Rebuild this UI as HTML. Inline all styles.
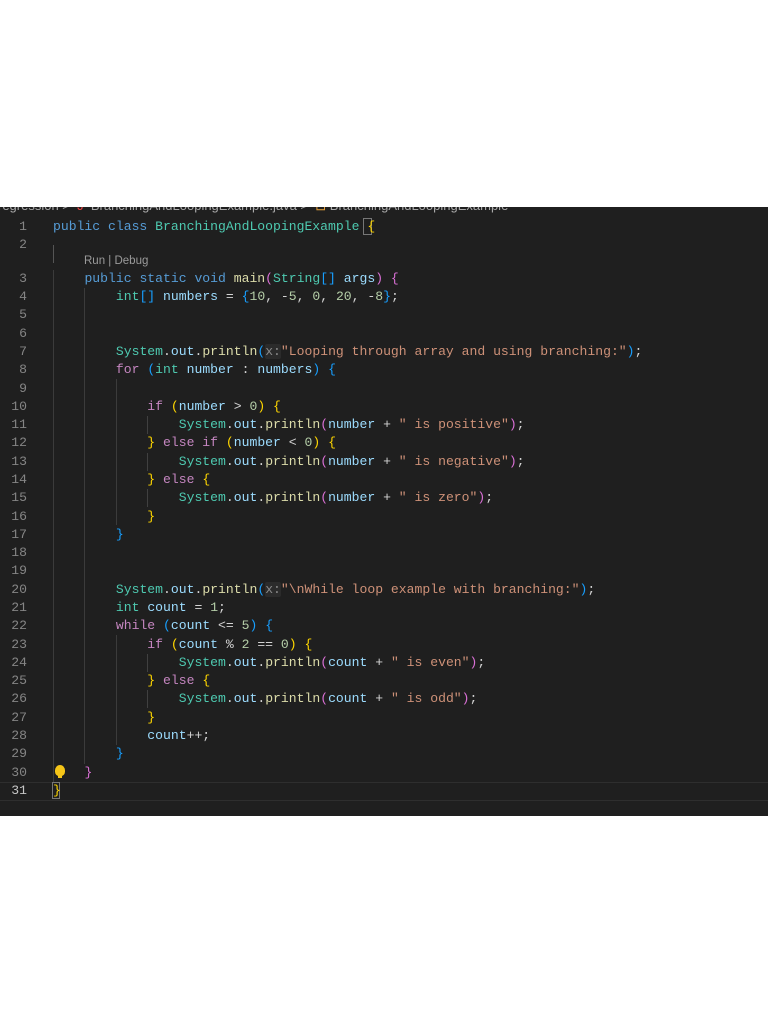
<!DOCTYPE html>
<html><head><meta charset="utf-8"><style>
body{margin:0;width:768px;height:1024px;background:#fff;position:relative;overflow:hidden}
#ed{position:absolute;left:0;top:207px;width:768px;height:609px;background:#1f1f1f;overflow:hidden}
#in{position:absolute;left:0;top:1px;width:768px;height:608px}
.bc{position:absolute;left:-2px;top:-9px;font:13px "Liberation Sans",sans-serif;color:#a9a9a9;white-space:pre}
.ln{position:absolute;left:0;width:27px;text-align:right;font:13.1px "Liberation Mono",monospace;color:#858585;height:18px;line-height:18px}
.cd{position:absolute;left:53px;font:13.1px "Liberation Mono",monospace;white-space:pre;color:#d4d4d4;height:18px;line-height:18px}
.k{color:#569cd6}.t{color:#4ec9b0}.f{color:#dcdcaa}.v{color:#9cdcfe}.s{color:#ce9178}.n{color:#b5cea8}.c{color:#c586c0}
.y{color:#ffd700}.p{color:#da70d6}.b{color:#179fff}
.h{color:#8b8b8b;background:#2b2b2b;border-radius:2px}
.g{position:absolute;width:1px;background:#3b3b3b}
</style></head><body>
<div id="ed">
<div class="bc">regression &gt;  <span style="color:#e44">J</span>  BranchingAndLoopingExample.java &gt;  <span style="color:#e8a33d">⊡</span> BranchingAndLoopingExample</div>
<div id="in">
<div style="position:absolute;left:0;top:574px;width:768px;height:17px;border-top:1px solid #2e2e2e;border-bottom:1px solid #2e2e2e"></div>
<div class="g" style="left:53px;top:37px;height:18px;background:#555"></div>
<div class="g" style="left:53px;top:62px;height:512px"></div>
<div class="g" style="left:84px;top:80px;height:476px"></div>
<div class="g" style="left:116px;top:171px;height:146px"></div>
<div class="g" style="left:147px;top:208px;height:18px;background:#404040"></div>
<div class="g" style="left:147px;top:245px;height:18px;background:#404040"></div>
<div class="g" style="left:147px;top:281px;height:18px;background:#404040"></div>
<div class="g" style="left:116px;top:427px;height:110px"></div>
<div class="g" style="left:147px;top:446px;height:18px;background:#404040"></div>
<div class="g" style="left:147px;top:482px;height:18px;background:#404040"></div>
<div style="position:absolute;left:84px;top:47px;font:11.5px 'Liberation Sans',sans-serif;color:#9a9a9a">Run | Debug</div>
<div style="position:absolute;left:55px;top:557px;width:10px;height:11px;border-radius:50% 50% 40% 40%;background:#f5c518"></div>
<div style="position:absolute;left:58px;top:567px;width:4px;height:3px;background:#f5c518"></div>
<div style="position:absolute;left:52px;top:574px;width:8px;height:17px;border:1px solid #777;box-sizing:border-box"></div>
<div style="position:absolute;left:363px;top:10px;width:9px;height:17px;border:1px solid #777;box-sizing:border-box"></div>

<div class="ln" style="top:10px">1</div><div class="cd" style="top:10px"><span class="k">public class</span> <span class="t">BranchingAndLoopingExample</span> <span class="y">{</span></div>
<div class="ln" style="top:28px">2</div>
<div class="ln" style="top:62px">3</div><div class="cd" style="top:62px">    <span class="k">public static void</span> <span class="f">main</span><span class="p">(</span><span class="t">String</span><span class="b">[]</span> <span class="v">args</span><span class="p">)</span> <span class="p">{</span></div>
<div class="ln" style="top:80px">4</div><div class="cd" style="top:80px">        <span class="t">int</span><span class="b">[]</span> <span class="v">numbers</span> = <span class="b">{</span><span class="n">10</span>, -<span class="n">5</span>, <span class="n">0</span>, <span class="n">20</span>, -<span class="n">8</span><span class="b">}</span>;</div>
<div class="ln" style="top:98px">5</div>
<div class="ln" style="top:117px">6</div>
<div class="ln" style="top:135px">7</div><div class="cd" style="top:135px">        <span class="t">System</span>.<span class="v">out</span>.<span class="f">println</span><span class="b">(</span><span class="h">x:</span><span class="s">"Looping through array and using branching:"</span><span class="b">)</span>;</div>
<div class="ln" style="top:153px">8</div><div class="cd" style="top:153px">        <span class="c">for</span> <span class="b">(</span><span class="t">int</span> <span class="v">number</span> : <span class="v">numbers</span><span class="b">)</span> <span class="b">{</span></div>
<div class="ln" style="top:172px">9</div>
<div class="ln" style="top:190px">10</div><div class="cd" style="top:190px">            <span class="c">if</span> <span class="y">(</span><span class="v">number</span> &gt; <span class="n">0</span><span class="y">)</span> <span class="y">{</span></div>
<div class="ln" style="top:208px">11</div><div class="cd" style="top:208px">                <span class="t">System</span>.<span class="v">out</span>.<span class="f">println</span><span class="p">(</span><span class="v">number</span> + <span class="s">" is positive"</span><span class="p">)</span>;</div>
<div class="ln" style="top:226px">12</div><div class="cd" style="top:226px">            <span class="y">}</span> <span class="c">else if</span> <span class="y">(</span><span class="v">number</span> &lt; <span class="n">0</span><span class="y">)</span> <span class="y">{</span></div>
<div class="ln" style="top:245px">13</div><div class="cd" style="top:245px">                <span class="t">System</span>.<span class="v">out</span>.<span class="f">println</span><span class="p">(</span><span class="v">number</span> + <span class="s">" is negative"</span><span class="p">)</span>;</div>
<div class="ln" style="top:263px">14</div><div class="cd" style="top:263px">            <span class="y">}</span> <span class="c">else</span> <span class="y">{</span></div>
<div class="ln" style="top:281px">15</div><div class="cd" style="top:281px">                <span class="t">System</span>.<span class="v">out</span>.<span class="f">println</span><span class="p">(</span><span class="v">number</span> + <span class="s">" is zero"</span><span class="p">)</span>;</div>
<div class="ln" style="top:300px">16</div><div class="cd" style="top:300px">            <span class="y">}</span></div>
<div class="ln" style="top:318px">17</div><div class="cd" style="top:318px">        <span class="b">}</span></div>
<div class="ln" style="top:336px">18</div>
<div class="ln" style="top:354px">19</div>
<div class="ln" style="top:373px">20</div><div class="cd" style="top:373px">        <span class="t">System</span>.<span class="v">out</span>.<span class="f">println</span><span class="b">(</span><span class="h">x:</span><span class="s">"\nWhile loop example with branching:"</span><span class="b">)</span>;</div>
<div class="ln" style="top:391px">21</div><div class="cd" style="top:391px">        <span class="t">int</span> <span class="v">count</span> = <span class="n">1</span>;</div>
<div class="ln" style="top:409px">22</div><div class="cd" style="top:409px">        <span class="c">while</span> <span class="b">(</span><span class="v">count</span> &lt;= <span class="n">5</span><span class="b">)</span> <span class="b">{</span></div>
<div class="ln" style="top:428px">23</div><div class="cd" style="top:428px">            <span class="c">if</span> <span class="y">(</span><span class="v">count</span> % <span class="n">2</span> == <span class="n">0</span><span class="y">)</span> <span class="y">{</span></div>
<div class="ln" style="top:446px">24</div><div class="cd" style="top:446px">                <span class="t">System</span>.<span class="v">out</span>.<span class="f">println</span><span class="p">(</span><span class="v">count</span> + <span class="s">" is even"</span><span class="p">)</span>;</div>
<div class="ln" style="top:464px">25</div><div class="cd" style="top:464px">            <span class="y">}</span> <span class="c">else</span> <span class="y">{</span></div>
<div class="ln" style="top:482px">26</div><div class="cd" style="top:482px">                <span class="t">System</span>.<span class="v">out</span>.<span class="f">println</span><span class="p">(</span><span class="v">count</span> + <span class="s">" is odd"</span><span class="p">)</span>;</div>
<div class="ln" style="top:501px">27</div><div class="cd" style="top:501px">            <span class="y">}</span></div>
<div class="ln" style="top:519px">28</div><div class="cd" style="top:519px">            <span class="v">count</span>++;</div>
<div class="ln" style="top:537px">29</div><div class="cd" style="top:537px">        <span class="b">}</span></div>
<div class="ln" style="top:556px">30</div><div class="cd" style="top:556px">    <span class="p">}</span></div>
<div class="ln" style="top:574px;color:#c6c6c6">31</div><div class="cd" style="top:574px"><span class="y">}</span></div>
</div>
</div>
</body></html>
